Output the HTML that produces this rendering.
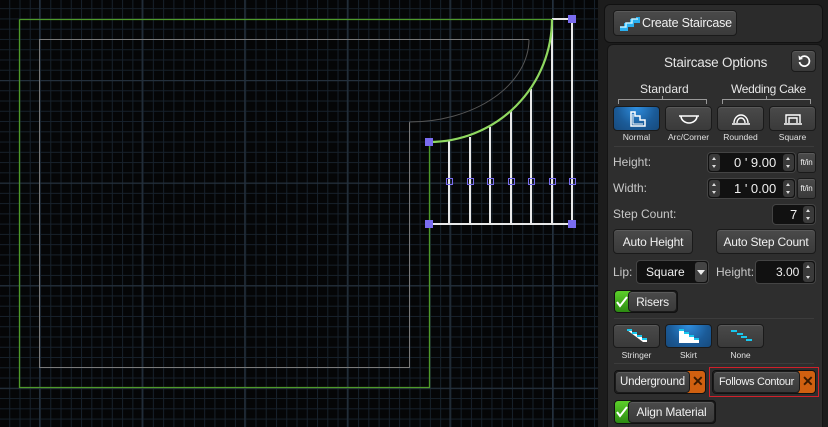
<!DOCTYPE html>
<html><head><meta charset="utf-8"><style>
*{margin:0;padding:0;box-sizing:border-box}
html,body{width:828px;height:427px;overflow:hidden}
body{background:#050607;font-family:"Liberation Sans",sans-serif;position:relative}
.a{position:absolute}
.t{position:absolute;color:#e6e6e6;font-size:12px;white-space:nowrap}
.lbl{position:absolute;color:#c8c8c8;font-size:11px;white-space:nowrap}
.btn{position:absolute;background:linear-gradient(#4a4a4a,#3a3a3a);border:1px solid #1a1a1a;border-radius:4px;box-shadow:inset 0 1px 0 #5a5a5a;color:#f0f0f0;font-size:12px;display:flex;align-items:center;justify-content:center;white-space:nowrap;letter-spacing:-0.2px}
.blue{background:radial-gradient(ellipse at 50% 0%,#2f8fe0,#1b5b98 60%,#174a7c);box-shadow:none}
.sm{position:absolute;color:#e0e0e0;font-size:8.5px;text-align:center;white-space:nowrap}
.inp{position:absolute;background:#111;border:1px solid #444;border-radius:4px;color:#f0f0f0;font-size:13px;white-space:nowrap}
.sp{position:absolute;width:11px;background:#3a3a3a;border-radius:3px;top:1px;bottom:1px}
.sp:before{content:"";position:absolute;left:3px;top:3px;border:2.5px solid transparent;border-bottom:3px solid #ddd;border-top:0}
.sp:after{content:"";position:absolute;left:3px;bottom:3px;border:2.5px solid transparent;border-top:3px solid #ddd;border-bottom:0}
.sep{position:absolute;height:1px;background:#3c3c3c}
</style></head><body>
<svg class="a" style="left:0;top:0" width="603" height="427">
<defs>
<pattern id="mi" x="-1.04" y="-2.08" width="10.26" height="10.26" patternUnits="userSpaceOnUse"><path d="M0.5 0V10.26M0 0.5H10.26" stroke="#17212b" stroke-width="1"/></pattern>
<pattern id="ma" x="39" y="80" width="102.6" height="102.6" patternUnits="userSpaceOnUse"><path d="M0.5 0V102.6M0 0.5H102.6" stroke="#24303c" stroke-width="1.5"/></pattern>
</defs>
<rect width="603" height="427" fill="#050607"/>
<rect width="603" height="427" fill="url(#mi)"/>
<rect width="603" height="427" fill="url(#ma)"/>
<path d="M19.5 19.5H552M19.5 19.5V387.5H429.5V142" stroke="#4f9a2a" fill="none" stroke-width="1.3"/>
<path d="M529 39.5H39.5V367.5H409.5V122" stroke="#7a7a7a" fill="none"/>
<path d="M529 39.5A120 83 0 0 1 409 122" stroke="#555" fill="none"/>
<g stroke="#e8e8e8" stroke-width="2" fill="none">
<path d="M552 19H572V224H429"/>
<path d="M449 141V224M470 137V224M490 127V224M511 111V224M531 89V224M552 19V224"/>
</g>
<path d="M429 142A123 123 0 0 0 552 19" stroke="#8fd860" stroke-width="2.2" fill="none"/>
<g fill="#7a6cf0"><rect x="425" y="138" width="8" height="8"/><rect x="568" y="15" width="8" height="8"/><rect x="425" y="220" width="8" height="8"/><rect x="568" y="220" width="8" height="8"/></g>
<g fill="none" stroke="#7a6cf0" stroke-width="1"><rect x="446.5" y="178.5" width="6" height="6"/><rect x="467.5" y="178.5" width="6" height="6"/><rect x="487.5" y="178.5" width="6" height="6"/><rect x="508.5" y="178.5" width="6" height="6"/><rect x="528.5" y="178.5" width="6" height="6"/><rect x="549.5" y="178.5" width="6" height="6"/><rect x="569.5" y="178.5" width="6" height="6"/></g>
</svg>
<div class="a" style="left:598px;top:0;width:230px;height:427px;background:#1c1c1c"></div>
<div class="a" style="left:604px;top:4px;width:219px;height:39px;background:#2b2b2b;border:1px solid #111;border-radius:6px"></div>
<div class="btn" style="left:613px;top:10px;width:124px;height:26px;justify-content:flex-start;padding-left:28px;font-size:12.5px">Create Staircase</div>
<svg class="a" style="left:618px;top:15px" width="22" height="18"><path d="M2 14h6v-4h6v-4h6V2" stroke="#2ab0f0" stroke-width="4" fill="none"/><path d="M2 12h6V8h6V4h6" stroke="#bfefff" stroke-width="1.5" fill="none"/></svg>
<div class="a" style="left:607px;top:44px;width:216px;height:390px;background:#2e2e2e;border:1px solid #141414;border-radius:6px"></div>
<div class="t" style="left:664px;top:55px;font-size:13.5px;letter-spacing:-0.2px">Staircase Options</div>
<div class="btn" style="left:791px;top:50px;width:25px;height:22px"><svg width="14" height="14"><path d="M4 3.5A5 5 0 1 1 2.5 8" stroke="#fff" stroke-width="1.7" fill="none"/><path d="M1.5 1.5L2 6L6 5Z" fill="#fff"/></svg></div>
<div class="t" style="left:640px;top:82px">Standard</div>
<div class="t" style="left:731px;top:82px;letter-spacing:-0.3px">Wedding Cake</div>
<svg class="a" style="left:600px;top:95px" width="228" height="10"><path d="M18.5 9V4.5H106.5V9M62.5 4.5V1M122.5 9V4.5H210.5V9M166.5 4.5V1" stroke="#999" fill="none"/></svg>
<div class="btn blue" style="left:613px;top:106px;width:47px;height:25px"><svg width="18" height="16"><path d="M3 1v14h14V9h-5V5H7V1z" stroke="#fff" stroke-width="1.5" fill="none"/><path d="M5 3v10h10" stroke="#fff" stroke-width="1" fill="none"/></svg></div>
<div class="btn" style="left:665px;top:106px;width:47px;height:25px"><svg width="24" height="14"><path d="M2 4h20M4 4a8 7 0 0 0 16 0" stroke="#fff" stroke-width="1.6" fill="none"/></svg></div>
<div class="btn" style="left:717px;top:106px;width:47px;height:25px"><svg width="22" height="14"><path d="M2 12h18M4 11a7 8 0 0 1 14 0M7 11a4 5 0 0 1 8 0" stroke="#fff" stroke-width="1.4" fill="none"/></svg></div>
<div class="btn" style="left:769px;top:106px;width:47px;height:25px"><svg width="22" height="14"><path d="M2 12h18M4 11V3h14v8M7 11V6h8v5" stroke="#fff" stroke-width="1.4" fill="none"/></svg></div>
<div class="sm" style="left:613px;top:132px;width:47px">Normal</div>
<div class="sm" style="left:665px;top:132px;width:47px">Arc/Corner</div>
<div class="sm" style="left:717px;top:132px;width:47px">Rounded</div>
<div class="sm" style="left:769px;top:132px;width:47px">Square</div>
<div class="sep" style="left:614px;top:146px;width:200px"></div>
<div class="lbl" style="left:613px;top:155px;font-size:12px">Height:</div>
<div class="lbl" style="left:613px;top:181px;font-size:12px">Width:</div>
<div class="lbl" style="left:613px;top:207px;font-size:12px">Step Count:</div>
<div class="inp" style="left:707px;top:152px;width:89px;height:21px"><div class="sp" style="left:1px"></div><div class="sp" style="right:1px"></div><span class="a" style="left:26px;top:2px">0 ' 9.00</span></div>
<div class="btn" style="left:797px;top:152px;width:19px;height:21px;font-size:8px;border-radius:3px">ft/in</div>
<div class="inp" style="left:707px;top:178px;width:89px;height:21px"><div class="sp" style="left:1px"></div><div class="sp" style="right:1px"></div><span class="a" style="left:26px;top:2px">1 ' 0.00</span></div>
<div class="btn" style="left:797px;top:178px;width:19px;height:21px;font-size:8px;border-radius:3px">ft/in</div>
<div class="inp" style="left:772px;top:204px;width:44px;height:21px"><div class="sp" style="right:1px"></div><span class="a" style="left:17px;top:2px">7</span></div>
<div class="btn" style="left:613px;top:229px;width:80px;height:25px">Auto Height</div>
<div class="btn" style="left:716px;top:229px;width:100px;height:25px">Auto Step Count</div>
<div class="lbl" style="left:613px;top:265px;font-size:12px">Lip:</div>
<div class="inp" style="left:636px;top:260px;width:73px;height:24px;font-size:12px"><span class="a" style="left:9px;top:4px">Square</span><div class="a" style="right:1px;top:1px;width:12px;height:20px;background:#444;border-radius:3px"><div class="a" style="left:2px;top:8px;border:4px solid transparent;border-top:5px solid #eee;border-bottom:0"></div></div></div>
<div class="lbl" style="left:716px;top:265px;font-size:12px">Height:</div>
<div class="inp" style="left:755px;top:260px;width:61px;height:24px;font-size:12px"><span class="a" style="left:20px;top:4px">3.00</span><div class="sp" style="right:1px"></div></div>
<div class="a" style="left:614px;top:290px;width:64px;height:23px;background:#1a1a1a;border-radius:4px;border:1px solid #111"></div>
<div class="a" style="left:615px;top:291px;width:16px;height:21px;background:linear-gradient(#5cd02a,#2c8a12);border-radius:3px 0 0 3px"></div>
<div class="btn" style="left:628px;top:291px;width:49px;height:21px">Risers</div>
<svg class="a" style="left:615px;top:295px" width="14" height="14"><path d="M2 7l3 4 7-9" stroke="#fff" stroke-width="2" fill="none"/></svg>
<div class="sep" style="left:614px;top:318px;width:200px"></div>
<div class="btn" style="left:613px;top:324px;width:47px;height:24px"><svg width="26" height="16"><path d="M3 2h5v3h5v3h5v3h5v3h-4z" fill="#fff"/><path d="M3 2h5M8 5h5M13 8h5M18 11h5" stroke="#18c8ef" stroke-width="2"/></svg></div>
<div class="btn blue" style="left:665px;top:324px;width:47px;height:24px"><svg width="26" height="16"><path d="M3 2h5v3h5v3h5v3h5v4H3z" fill="#fff"/><path d="M3 2h5M8 5h5M13 8h5M18 11h5" stroke="#18c8ef" stroke-width="2"/></svg></div>
<div class="btn" style="left:717px;top:324px;width:47px;height:24px"><svg width="26" height="16"><path d="M3 3h6M9 6h6M13 9h6M18 12h6" stroke="#18c8ef" stroke-width="2"/></svg></div>
<div class="sm" style="left:613px;top:350px;width:47px">Stringer</div>
<div class="sm" style="left:665px;top:350px;width:47px">Skirt</div>
<div class="sm" style="left:717px;top:350px;width:47px">None</div>
<div class="sep" style="left:614px;top:363px;width:200px"></div>
<div class="a" style="left:614px;top:370px;width:92px;height:24px;background:linear-gradient(90deg,#2a2a2a 80%,#d06010 80%);border-radius:4px;border:1px solid #111"></div>
<div class="btn" style="left:615px;top:371px;width:75px;height:22px;font-size:11.5px">Underground</div>
<div class="t" style="left:692px;top:373px;color:#3a1a00;font-size:14px;font-weight:bold">✕</div>
<div class="a" style="left:709px;top:367px;width:110px;height:30px;border:1px solid #d0202a"></div>
<div class="a" style="left:712px;top:370px;width:104px;height:24px;background:linear-gradient(90deg,#2a2a2a 84%,#d06010 84%);border-radius:4px;border:1px solid #111"></div>
<div class="btn" style="left:713px;top:371px;width:87px;height:22px;font-size:11px;letter-spacing:-0.3px">Follows Contour</div>
<div class="t" style="left:802px;top:373px;color:#3a1a00;font-size:14px;font-weight:bold">✕</div>
<div class="a" style="left:614px;top:400px;width:102px;height:24px;background:#1a1a1a;border-radius:4px;border:1px solid #111"></div>
<div class="a" style="left:615px;top:401px;width:16px;height:22px;background:linear-gradient(#5cd02a,#2c8a12);border-radius:3px 0 0 3px"></div>
<div class="btn" style="left:628px;top:401px;width:87px;height:22px">Align Material</div>
<svg class="a" style="left:615px;top:405px" width="14" height="14"><path d="M2 7l3 4 7-9" stroke="#fff" stroke-width="2" fill="none"/></svg>
</body></html>
